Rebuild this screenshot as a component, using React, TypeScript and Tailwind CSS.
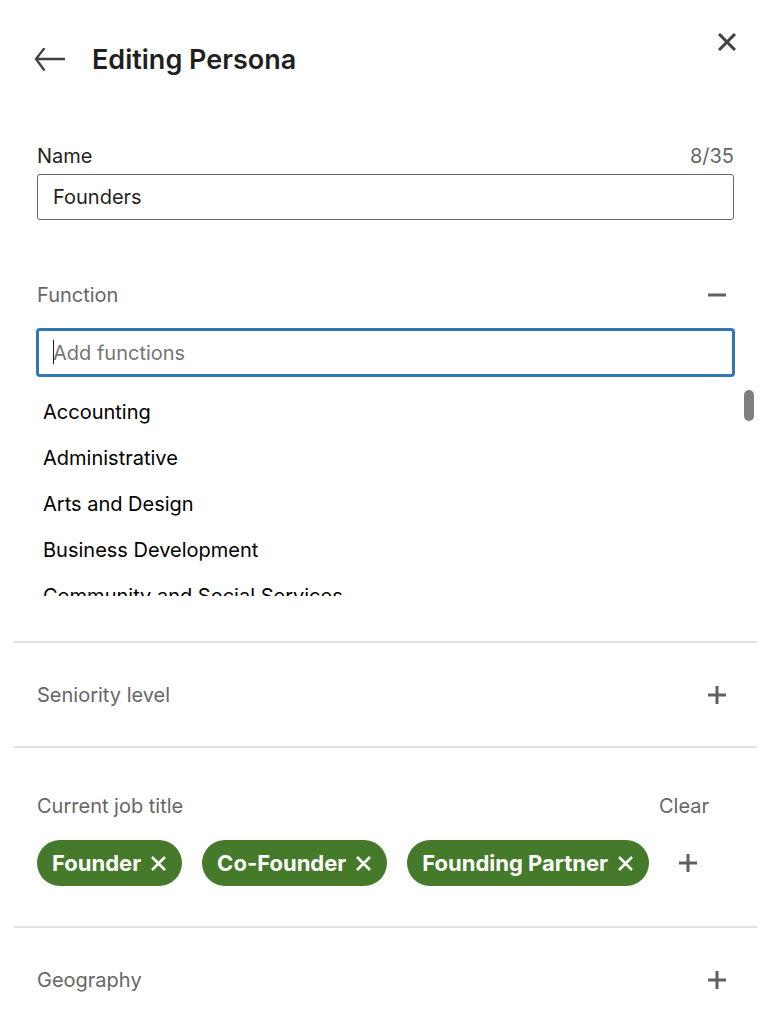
import { useState } from "react"

const functions = [
  "Accounting",
  "Administrative",
  "Arts and Design",
  "Business Development",
  "Community and Social Services",
]

const initialTitles = ["Founder", "Co-Founder", "Founding Partner"]

const MAX_NAME = 35

function PlusIcon() {
  return (
    <svg width="18" height="18" viewBox="0 0 18 18" fill="none" stroke="currentColor" strokeWidth="3" aria-hidden="true">
      <path d="M9 0v18M0 9h18" />
    </svg>
  )
}

function MinusIcon() {
  return (
    <svg width="18" height="18" viewBox="0 0 18 18" fill="none" stroke="currentColor" strokeWidth="3" aria-hidden="true">
      <path d="M0 9h18" />
    </svg>
  )
}

function CollapsedSection({ title }: { title: string }) {
  return (
    <section className="flex items-center justify-between border-t-2 border-[#e2e2e2] pb-[37px] pl-[23px] pr-[31px] pt-[38px]">
      <h2 className="text-xl leading-7 text-[#666666]">{title}</h2>
      <button type="button" aria-label={`Add ${title}`} className="text-[#606060]">
        <PlusIcon />
      </button>
    </section>
  )
}

export default function App() {
  const [name, setName] = useState("Founders")
  const [query, setQuery] = useState("")
  const [titles, setTitles] = useState(initialTitles)

  const matches = functions.filter((item) => item.toLowerCase().includes(query.toLowerCase()))

  return (
    <main className="bg-white pl-3.5 pr-2.5 font-['Inter','Liberation_Sans',sans-serif] text-xl leading-7 text-[#1f1f1f]">
      <header className="flex items-start justify-between pl-5 pr-[21px] pt-[30px]">
        <div className="flex items-center gap-[27px] pt-2.5">
          <button type="button" aria-label="Back" className="text-[#404040]">
            <svg width="31" height="24" viewBox="0 0 31 24" fill="none" stroke="currentColor" strokeWidth="2.300" aria-hidden="true">
              <path d="M31 11H2M10.500 0L2 11l8.500 11.500" />
            </svg>
          </button>
          <h1 className="text-[27px] font-semibold leading-10">Editing Persona</h1>
        </div>
        <button type="button" aria-label="Close" className="flex h-6 items-center text-[#404040]">
          <svg width="18" height="18" viewBox="0 0 18 18" fill="none" stroke="currentColor" strokeWidth="3" aria-hidden="true">
            <path d="M1 1l16 16M17 1L1 17" />
          </svg>
        </button>
      </header>

      <section className="px-[23px] pt-[62px]">
        <div className="flex items-center justify-between">
          <label htmlFor="persona-name">Name</label>
          <span className="text-[#666666]">
            {name.length}/{MAX_NAME}
          </span>
        </div>
        <input
          id="persona-name"
          type="text"
          value={name}
          maxLength={MAX_NAME}
          onChange={(e) => setName(e.target.value)}
          className="mt-1 block h-[46px] w-full rounded-[3px] border border-[#666666] px-[15px] outline-none"
        />
      </section>

      <section className="px-[22px] pb-[45px] pt-[61px]">
        <div className="flex items-center justify-between pl-px pr-[9px]">
          <label htmlFor="function-search" className="text-[#666666]">
            Function
          </label>
          <button type="button" aria-label="Collapse Function" className="text-[#606060]">
            <MinusIcon />
          </button>
        </div>
        <div className="relative mt-[19px]">
          <input
            id="function-search"
            type="text"
            value={query}
            placeholder="Add functions"
            onChange={(e) => setQuery(e.target.value)}
            className="block h-[49px] w-full rounded border-3 border-[#3376b4] px-3.5 caret-transparent outline-none placeholder:text-[#757575]"
          />
          {/* text caret */}
          {query === "" && <span className="absolute left-[17px] top-3 h-6 w-px bg-[#1f1f1f]" />}
        </div>
        <div className="relative mt-3">
          <ul className="h-[207px] overflow-y-auto text-black [scrollbar-width:none]">
            {matches.map((item) => (
              <li key={item}>
                <button type="button" className="block w-full px-[7px] py-[9px] text-left">
                  {item}
                </button>
              </li>
            ))}
          </ul>
          {/* scroll thumb */}
          <div className="absolute -right-[19px] top-px h-[31px] w-2.5 rounded-full bg-[#7f7f7f]" />
        </div>
      </section>

      <CollapsedSection title="Seniority level" />

      <section className="border-t-2 border-[#e2e2e2] px-[23px] pb-10 pt-11">
        <div className="flex items-center justify-between pr-[25px] text-[#666666]">
          <h2>Current job title</h2>
          <button type="button" onClick={() => setTitles([])}>
            Clear
          </button>
        </div>
        <div className="mt-5 flex flex-wrap items-center gap-5">
          {titles.map((title) => (
            <span
              key={title}
              className="flex h-[46px] items-center gap-2.5 rounded-full bg-[#447a29] pl-[15px] pr-4 text-[22px] font-bold text-white"
            >
              {title}
              <button
                type="button"
                aria-label={`Remove ${title}`}
                onClick={() => setTitles(titles.filter((t) => t !== title))}
              >
                <svg width="15" height="15" viewBox="0 0 15 15" fill="none" stroke="currentColor" strokeWidth="2.600" aria-hidden="true">
                  <path d="M1 1l13 13M14 1L1 14" />
                </svg>
              </button>
            </span>
          ))}
          <button type="button" aria-label="Add job title" className="ml-2.5 text-[#606060]">
            <PlusIcon />
          </button>
        </div>
      </section>

      <CollapsedSection title="Geography" />
    </main>
  )
}
